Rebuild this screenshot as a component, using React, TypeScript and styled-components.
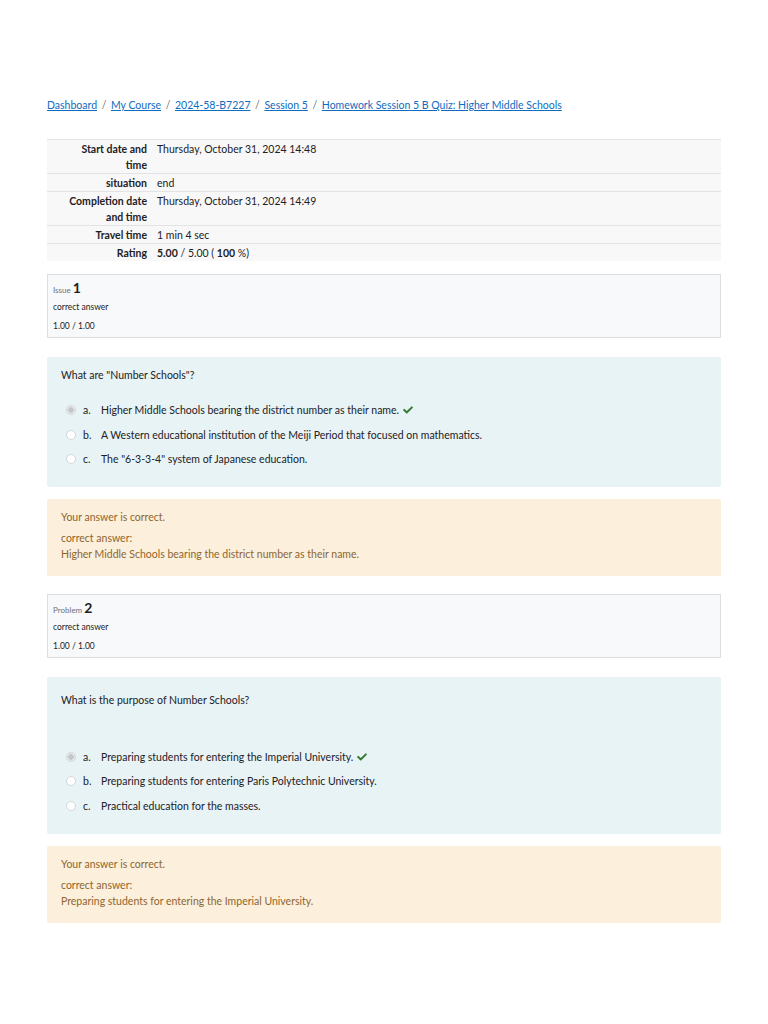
import React from 'react';
import styled, { createGlobalStyle } from 'styled-components';

const GlobalStyle = createGlobalStyle`
  body {
    margin: 0;
    background: #ffffff;
    font-family: 'Lato', 'Open Sans', sans-serif;
    font-size: 10.5px;
    color: #1d2125;
  }
`;

interface Option {
  letter: string;
  text: string;
  selected?: boolean;
}

interface Question {
  kind: string;
  number: number;
  text: string;
  spacious?: boolean;
  options: Option[];
  answer: string;
}

const crumbs = ['Dashboard', 'My Course', '2024-58-B7227', 'Session 5', 'Homework Session 5 B Quiz: Higher Middle Schools'];

const summary: [string, React.ReactNode][] = [
  ['Start date and time', 'Thursday, October 31, 2024 14:48'],
  ['situation', 'end'],
  ['Completion date and time', 'Thursday, October 31, 2024 14:49'],
  ['Travel time', '1 min 4 sec'],
  ['Rating', <><b>5.00</b> / 5.00 ( <b>100</b> %)</>],
];

const questions: Question[] = [
  {
    kind: 'Issue',
    number: 1,
    text: 'What are "Number Schools"?',
    options: [
      { letter: 'a.', text: 'Higher Middle Schools bearing the district number as their name.', selected: true },
      { letter: 'b.', text: 'A Western educational institution of the Meiji Period that focused on mathematics.' },
      { letter: 'c.', text: 'The "6-3-3-4" system of Japanese education.' },
    ],
    answer: 'Higher Middle Schools bearing the district number as their name.',
  },
  {
    kind: 'Problem',
    number: 2,
    text: 'What is the purpose of Number Schools?',
    spacious: true,
    options: [
      { letter: 'a.', text: 'Preparing students for entering the Imperial University.', selected: true },
      { letter: 'b.', text: 'Preparing students for entering Paris Polytechnic University.' },
      { letter: 'c.', text: 'Practical education for the masses.' },
    ],
    answer: 'Preparing students for entering the Imperial University.',
  },
];

const Check = () => (
  <CheckIcon viewBox="0 0 512 512" aria-hidden>
    <path d="M173.9 439.4 7.5 273c-10-10-10-26.2 0-36.2l36.2-36.2c10-10 26.2-10 36.2 0L192 312.7 432.1 72.6c10-10 26.2-10 36.2 0l36.2 36.2c10 10 10 26.2 0 36.2L210.1 439.4c-10 10-26.2 10-36.2 0z" />
  </CheckIcon>
);

const App = () => (
  <Page>
    <GlobalStyle />
    <Breadcrumb>
      {crumbs.map((crumb, i) => (
        <React.Fragment key={crumb}>
          {i > 0 && <Divider>/</Divider>}
          <Crumb href="#">{crumb}</Crumb>
        </React.Fragment>
      ))}
    </Breadcrumb>

    <Summary>
      <tbody>
        {summary.map(([label, value]) => (
          <tr key={label}>
            <Label>{label}</Label>
            <Value>{value}</Value>
          </tr>
        ))}
      </tbody>
    </Summary>

    {questions.map((q) => (
      <React.Fragment key={q.number}>
        <InfoBox>
          <InfoTitle>
            {q.kind} <QNumber>{q.number}</QNumber>
          </InfoTitle>
          <InfoLine>correct answer</InfoLine>
          <InfoLine>1.00 / 1.00</InfoLine>
        </InfoBox>

        <Formulation spacious={q.spacious}>
          <QText spacious={q.spacious}>{q.text}</QText>
          <Options>
            {q.options.map((o) => (
              <OptionRow key={o.letter}>
                <Radio selected={o.selected} />
                <Letter>{o.letter}</Letter>
                <span>{o.text}</span>
                {o.selected && <Check />}
              </OptionRow>
            ))}
          </Options>
        </Formulation>

        <Feedback>
          <FeedbackLine>Your answer is correct.</FeedbackLine>
          <RightAnswer>
            correct answer:
            <br />
            {q.answer}
          </RightAnswer>
        </Feedback>
      </React.Fragment>
    ))}
  </Page>
);

const Page = styled.div`
  width: 674px;
  margin: 0 0 0 47px;
  padding: 97px 0 60px;
`;

const Breadcrumb = styled.nav`
  display: flex;
  align-items: center;
  line-height: 16px;
  margin-bottom: 26px;
`;

const Crumb = styled.a`
  color: #0f6cbf;
  text-decoration: underline;
`;

const Divider = styled.span`
  color: #6a737b;
  padding: 0 4.6px;
`;

const Summary = styled.table`
  width: 100%;
  border-collapse: collapse;
  margin-bottom: 13px;

  tr {
    background: #f8f8f8;
    border-top: 1px solid #e2e3e5;
  }
`;

const Label = styled.th`
  width: 82px;
  padding: 1px 4px 0 18px;
  text-align: right;
  vertical-align: top;
  font-weight: 700;
  line-height: 16px;
`;

const Value = styled.td`
  padding: 1px 6px 0;
  vertical-align: top;
  line-height: 16px;
`;

const InfoBox = styled.div`
  border: 1px solid #dcdfe2;
  background: #f8f9fa;
  padding: 6px 5px 5px;
  margin-bottom: 19px;
`;

const InfoTitle = styled.div`
  font-size: 8px;
  color: #6a737b;
  line-height: 14px;
  margin-bottom: 4px;
`;

const QNumber = styled.span`
  font-size: 14px;
  font-weight: 700;
  color: #1d2125;
`;

const InfoLine = styled.div`
  font-size: 8.5px;
  line-height: 12px;
  margin-bottom: 7px;

  &:last-child {
    margin-bottom: 0;
  }
`;

const Formulation = styled.div<{ spacious?: boolean }>`
  background: #e7f3f5;
  border-radius: 2px;
  padding: ${(p) => (p.spacious ? '15px 14px 20px' : '10px 14px 19px')};
  margin-bottom: 12px;
`;

const QText = styled.div<{ spacious?: boolean }>`
  line-height: 16px;
  margin-bottom: ${(p) => (p.spacious ? '41px' : '19px')};
`;

const Options = styled.div`
  display: flex;
  flex-direction: column;
  gap: 8px;
  padding-left: 5px;
`;

const OptionRow = styled.div`
  display: flex;
  align-items: center;
  line-height: 16.5px;
`;

const Radio = styled.span<{ selected?: boolean }>`
  box-sizing: border-box;
  width: 10px;
  height: 10px;
  border-radius: 50%;
  border: 1px solid #d4d7da;
  background: ${(p) => (p.selected ? 'radial-gradient(circle, #c4c7ca 0 2.5px, #e6e7e8 3px)' : '#ffffff')};
  margin-right: 7px;
`;

const Letter = styled.span`
  width: 18px;
`;

const CheckIcon = styled.svg`
  width: 10px;
  height: 10px;
  margin-left: 4px;
  fill: #357a32;
`;

const Feedback = styled.div`
  background: #fcefdc;
  color: #8e662e;
  border-radius: 2px;
  padding: 10px 14px 14px;
  margin-bottom: 18px;
`;

const FeedbackLine = styled.div`
  line-height: 16px;
  margin-bottom: 5px;
`;

const RightAnswer = styled.div`
  line-height: 16px;
`;

export default App;
